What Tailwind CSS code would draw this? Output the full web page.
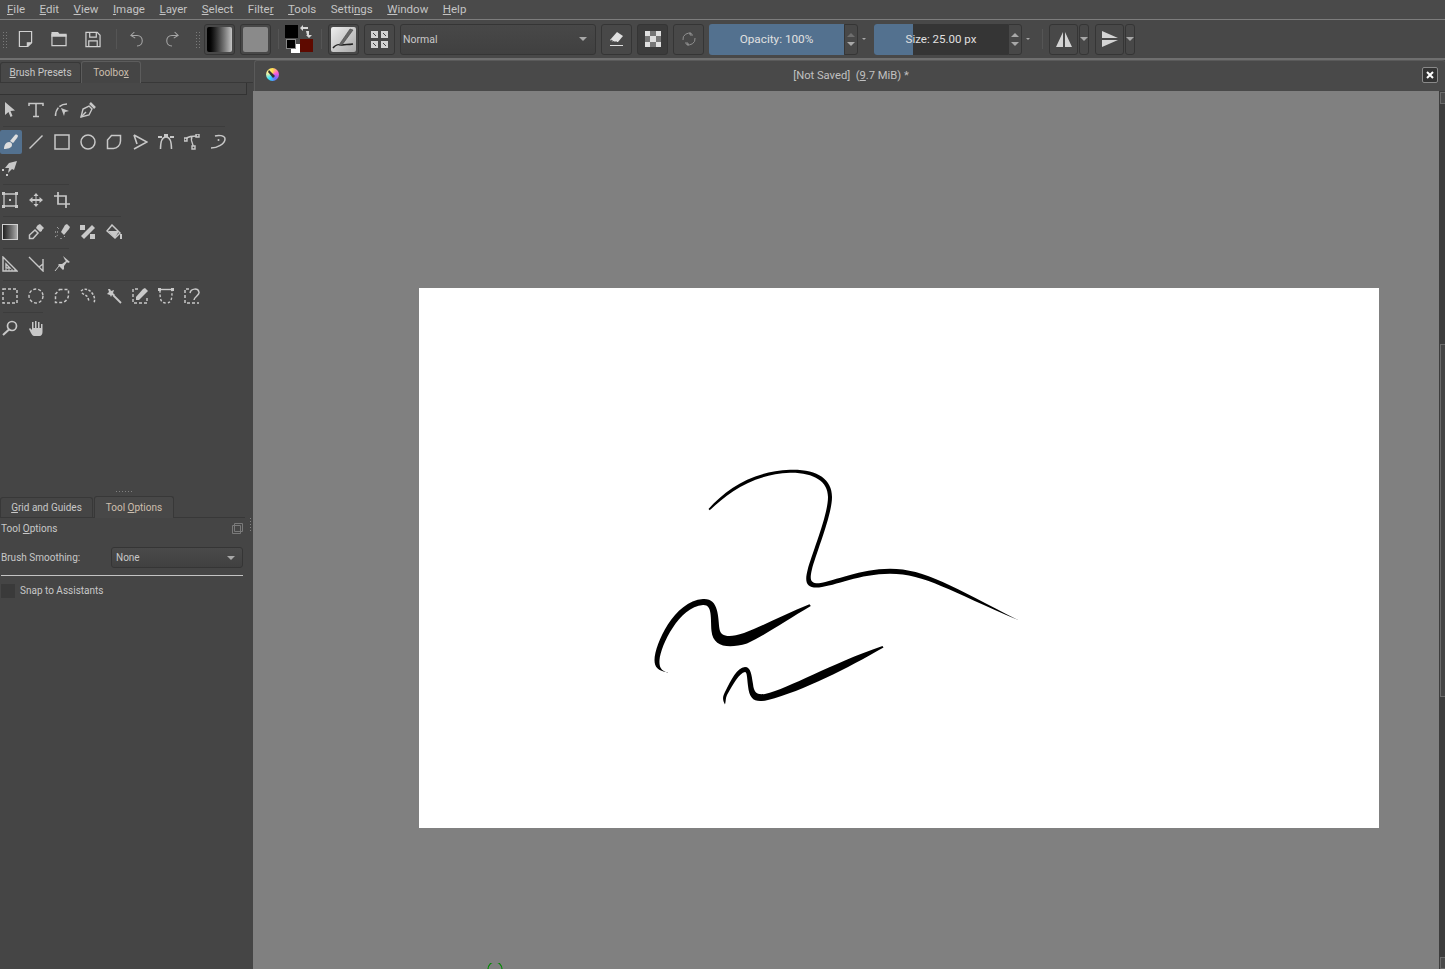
<!DOCTYPE html>
<html lang="en">
  <head>
    <meta charset="UTF-8" />
    <title>Krita</title>
    <script src="https://cdn.jsdelivr.net/npm/@tailwindcss/browser@4"></script>
  </head>
  <body class="bg-[#474747] font-['Roboto',sans-serif] text-[#c8c8c8] overflow-hidden">
    <div class="h-[969px] flex flex-col">
      <!-- menu -->
      <nav class="h-[20px] shrink-0 bg-[#4a4a4a] border-b border-[#7c7c7c] flex items-center pl-[7px] gap-[14.5px] text-[11.5px] leading-none text-[#c4c4c4]">
        <span><u>F</u>ile</span>
        <span><u>E</u>dit</span>
        <span><u>V</u>iew</span>
        <span><u>I</u>mage</span>
        <span><u>L</u>ayer</span>
        <span><u>S</u>elect</span>
        <span>Filte<u>r</u></span>
        <span><u>T</u>ools</span>
        <span>Setti<u>n</u>gs</span>
        <span><u>W</u>indow</span>
        <span><u>H</u>elp</span>
      </nav>

      <!-- toolbar -->
      <div class="h-[40px] shrink-0 bg-[#484848] border-b-2 border-b-[#6f6f6f] flex items-center text-[11px]">
        <div class="ml-[2px] w-[6px] h-[17px] bg-[radial-gradient(#7a7a7a_1px,transparent_1px)] bg-[length:3px_3px]"></div>
        <svg class="ml-[10px] w-[15px] h-[18px]" viewBox="0 0 16 18" fill="none" stroke="#d0d0d0" stroke-width="1.3"><path d="M1.5 1h13v12l-4 4h-9z"/><path d="M14 13h-4v4" fill="#d0d0d0"/></svg>
        <svg class="ml-[18px] w-[16px] h-[16px]" viewBox="0 0 17 16" fill="none" stroke="#d0d0d0" stroke-width="1.3"><path d="M1 3h15v12H1z"/><path d="M0.5 0.5h7l2 3h7v2h-16z" fill="#d0d0d0" stroke="none"/></svg>
        <svg class="ml-[18px] w-[16px] h-[17px]" viewBox="0 0 17 17" fill="none" stroke="#d0d0d0" stroke-width="1.3"><path d="M1 1h12l3 3v12H1z"/><path d="M5 1v5h7V1M4 16v-6h9v6"/></svg>
        <div class="ml-[15px] w-px h-[20px] bg-[#555]"></div>
        <svg class="ml-[13px] w-[14px] h-[18px]" viewBox="0 0 16 18" fill="none" stroke="#a8a8a8" stroke-width="1.2"><path d="M5 1L1 5l5 3"/><path d="M1.500 5H8c4 0 6 3 6 6s-2 6-6 6"/></svg>
        <svg class="ml-[21px] w-[14px] h-[18px]" viewBox="0 0 16 18" fill="none" stroke="#a8a8a8" stroke-width="1.2"><path d="M11 1l4 4-5 3"/><path d="M14.500 5H8c-4 0-6 3-6 6s2 6 6 6"/></svg>
        <div class="ml-[16px] w-[6px] h-[17px] bg-[radial-gradient(#7a7a7a_1px,transparent_1px)] bg-[length:3px_3px]"></div>
        <div class="ml-[3px] w-[31px] h-[31px] rounded-[3px] border border-[#353535] p-[2px]"><div class="h-full rounded-[2px] bg-linear-to-r from-black to-[#c4c4c4]"></div></div>
        <div class="ml-[5px] w-[31px] h-[31px] rounded-[3px] border border-[#353535] p-[2px]"><div class="h-full rounded-[2px] bg-[#8a8a8a]"></div></div>
        <div class="ml-[7px] w-px h-[20px] bg-[#555]"></div>
        <!-- colour selector -->
        <div class="relative ml-[6px] w-[29px] h-[29px]">
          <div class="absolute left-0 top-0 w-[13px] h-[13px] bg-black"></div>
          <svg class="absolute left-[15px] top-0 w-[13px] h-[13px]" viewBox="0 0 13 13" fill="#d8d8d8"><path d="M0 3l3-3v2h5v2H3v2zM6 6h3v4h3l-3 3-3-3h1z"/></svg>
          <div class="absolute left-[6px] top-[19px] w-[9px] h-[9px] bg-white"></div>
          <div class="absolute left-[1px] top-[14px] w-[10px] h-[10px] bg-black border border-[#888]"></div>
          <div class="absolute left-[15px] top-[14px] w-[13px] h-[13px] bg-[#5e0a00]"></div>
        </div>
        <div class="ml-[7px] w-px h-[20px] bg-[#555]"></div>
        <div class="ml-[6px] w-[31px] h-[31px] rounded-[3px] border border-[#353535] p-[2px]">
          <svg class="w-full h-full rounded-[2px] bg-linear-to-br from-[#eeeeee] to-[#a8a8a8]" viewBox="0 0 25 25" fill="none" stroke="#222"><path d="M2 21c4-5 6-3 9-3 3-1 6 0 11-1" stroke-width="1.4"/><path d="M8 18L19 2l3 1L11 18z" fill="#666" stroke="#444" stroke-width=".6"/></svg>
        </div>
        <div class="ml-[5px] w-[31px] h-[31px] rounded-[3px] border border-[#353535] flex items-center justify-center">
          <svg class="w-[17px] h-[17px]" viewBox="0 0 17 17" fill="#d4d4d4"><path d="M0 0h7v7H0zM10 0h7v7h-7zM0 10h7v7H0zM10 10h7v7h-7z"/><path d="M2 2l3 3M12 2l3 3M2 12l3 3M12 12l3 3" stroke="#444"/></svg>
        </div>
        <div class="ml-[5px] w-[196px] h-[31px] rounded-[3px] border border-[#353535] bg-linear-to-b from-[#484848] to-[#404040] flex items-center pl-[2px] pr-[8px] justify-between text-[10.5px] text-[#c8c8c8]">
          <span class="pt-px">Normal</span>
          <div class="w-0 h-0 border-x-[4px] border-x-transparent border-t-[4px] border-t-[#a8a8a8]"></div>
        </div>
        <div class="ml-[5px] w-[31px] h-[31px] rounded-[3px] border border-[#353535] flex items-center justify-center">
          <svg class="w-[15px] h-[14px]" viewBox="0 0 15 14" fill="#e0e0e0"><path d="M8 0l6 4-5 6H4L1 8z"/><path d="M1 13h13v1H1z"/><path d="M2 8l3 2h3" stroke="#484848" fill="none"/></svg>
        </div>
        <div class="ml-[5px] w-[31px] h-[31px] rounded-[3px] border border-[#353535] bg-[#3c3c3c] flex items-center justify-center">
          <svg class="w-[16px] h-[16px]" viewBox="0 0 16 16"><path d="M0 0h16v16H0z" fill="#e0e0e0"/><path d="M5 0h6v5H5zM0 5h5v6H0zM11 5h5v6h-5zM5 11h6v5H5z" fill="#777"/></svg>
        </div>
        <div class="ml-[5px] w-[31px] h-[31px] rounded-[3px] border border-[#353535] flex items-center justify-center">
          <svg class="w-[14px] h-[14px]" viewBox="0 0 14 14" fill="none" stroke="#8f8f8f"><path d="M1 8a6 6 0 0 1 9-6M13 6a6 6 0 0 1-9 6"/><path d="M8 0v3h3M6 14v-3H3"/></svg>
        </div>
        <div class="ml-[5px] w-[135px] h-[31px] pt-px rounded-l-[3px] bg-[#53718f] flex items-center justify-center text-[#e0e0e0] text-[11.75px]">Opacity:&nbsp;100%</div>
        <div class="w-[14px] h-[31px] rounded-r-[3px] border border-[#353535] flex flex-col items-center justify-center gap-[5px]">
          <div class="w-0 h-0 border-x-[4px] border-x-transparent border-b-[4px] border-b-[#6e6e6e]"></div>
          <div class="w-0 h-0 border-x-[4px] border-x-transparent border-t-[4px] border-t-[#a8a8a8]"></div>
        </div>
        <div class="ml-[4px] w-0 h-0 border-x-[2px] border-x-transparent border-t-[2px] border-t-[#a8a8a8]"></div>
        <div class="ml-[8px] w-[134px] h-[31px] pt-px rounded-l-[3px] bg-[#353535] relative flex items-center justify-center text-[#e0e0e0] text-[11.5px]">
          <div class="absolute left-0 top-0 bottom-0 w-[39px] rounded-l-[3px] bg-[#53718f]"></div>
          <span class="relative">Size:&nbsp;25.00&nbsp;px</span>
        </div>
        <div class="w-[14px] h-[31px] rounded-r-[3px] border border-[#353535] flex flex-col items-center justify-center gap-[5px]">
          <div class="w-0 h-0 border-x-[4px] border-x-transparent border-b-[4px] border-b-[#a8a8a8]"></div>
          <div class="w-0 h-0 border-x-[4px] border-x-transparent border-t-[4px] border-t-[#a8a8a8]"></div>
        </div>
        <div class="ml-[4px] w-0 h-0 border-x-[2px] border-x-transparent border-t-[2px] border-t-[#a8a8a8]"></div>
        <div class="ml-[12px] w-px h-[20px] bg-[#555]"></div>
        <div class="ml-[6px] w-[29px] h-[31px] rounded-[3px] border border-[#353535] flex items-center justify-center">
          <svg class="w-[16px] h-[15px]" viewBox="0 0 16 15" fill="#d4d4d4"><path d="M7 0v15H0zM9 0v15h7z"/></svg>
        </div>
        <div class="ml-px w-[10px] h-[31px] rounded-[3px] border border-[#353535] flex items-center justify-center">
          <div class="w-0 h-0 border-x-[4px] border-x-transparent border-t-[4px] border-t-[#a8a8a8]"></div>
        </div>
        <div class="ml-[6px] w-[29px] h-[31px] rounded-[3px] border border-[#353535] flex items-center justify-center">
          <svg class="w-[16px] h-[16px]" viewBox="0 0 16 16" fill="#d4d4d4"><path d="M0 0l16 7H0zM0 9h16L0 16z"/></svg>
        </div>
        <div class="ml-px w-[10px] h-[31px] rounded-[3px] border border-[#353535] flex items-center justify-center">
          <div class="w-0 h-0 border-x-[4px] border-x-transparent border-t-[4px] border-t-[#a8a8a8]"></div>
        </div>
      </div>

      <div class="flex-1 flex min-h-0">
        <!-- left dock -->
        <aside class="w-[253px] shrink-0 bg-[#454545] flex flex-col text-[10px]">
          <div class="h-[23px] shrink-0 flex items-end border-b border-[#383838] bg-[#484848]">
            <div class="w-[81px] h-[20px] rounded-t-[3px] border border-b-0 border-[#383838] flex items-center justify-center"><span><u>B</u>rush Presets</span></div>
            <div class="w-[60px] h-[22px] rounded-t-[3px] border border-b-0 border-[#5c5c5c] bg-[#454545] -mb-px flex items-center justify-center text-[#cdbfae]"><span>Toolbo<u>x</u></span></div>
          </div>
          <div class="w-[247px] h-[12px] shrink-0 border-r border-b border-[#333] bg-[#484848]"></div>

          <div class="flex-1 pt-[2px]">
            <div class="flex h-[26px] -ml-[3px]">
              <div class="w-[26px] flex items-center justify-center"><svg class="w-4 h-4" viewBox="0 0 16 16" fill="#c8c8c8"><path d="M3 0l10 8.500-4.500.5 2 5-2 1-2-5L3 13z"/></svg></div>
              <div class="w-[26px] flex items-center justify-center"><svg class="w-4 h-4" viewBox="0 0 16 16" fill="none" stroke="#c8c8c8" stroke-width="1.500"><path d="M1 4V1.500h14V4M8 1.500v13M5 14.500h6"/></svg></div>
              <div class="w-[26px] flex items-center justify-center"><svg class="w-4 h-4" viewBox="0 0 16 16" fill="none" stroke="#c8c8c8" stroke-width="1.500"><path d="M1.500 14C1.500 8 5 2 13 2" stroke-dasharray="9 1.500"/><path d="M7 6l8 3-4 1-1 4z" fill="#c8c8c8" stroke="none"/></svg></div>
              <div class="w-[26px] flex items-center justify-center"><svg class="w-4 h-4" viewBox="0 0 16 16" fill="none" stroke="#c8c8c8" stroke-width="1.400"><path d="M1 15l2-8 6-3 3 3-3 6z"/><path d="M1 15l5-5"/><path d="M10 1l5 5" stroke-width="2.500"/></svg></div>
            </div>
            <div class="h-px w-[222px] ml-[3px] mt-[3px] mb-[2px] bg-[#3c3c3c]"></div>

            <div class="flex h-[26px] -ml-[3px]">
              <div class="w-[26px] flex items-center justify-start pl-[3px]"><div class="w-[22px] h-[24px] rounded-[2px] bg-[#53718f] flex items-center justify-center"><svg class="w-4 h-4" viewBox="0 0 16 16" fill="#dedede"><path d="M1 15c0-4 2-7 5-7 2 0 3 1 3 3 0 3-5 4-8 4z"/><path d="M7 7l5-6c1-1 3 0 3 1s-4 6-5 7z"/></svg></div></div>
              <div class="w-[26px] flex items-center justify-center"><svg class="w-4 h-4" viewBox="0 0 16 16" fill="none" stroke="#c8c8c8" stroke-width="1.500"><path d="M1.500 14.500L14.500 1.500"/></svg></div>
              <div class="w-[26px] flex items-center justify-center"><svg class="w-4 h-4" viewBox="0 0 16 16" fill="none" stroke="#c8c8c8" stroke-width="1.500"><path d="M1 1h14v14H1z"/></svg></div>
              <div class="w-[26px] flex items-center justify-center"><svg class="w-4 h-4" viewBox="0 0 16 16" fill="none" stroke="#c8c8c8" stroke-width="1.500"><circle cx="8" cy="8" r="7"/></svg></div>
              <div class="w-[26px] flex items-center justify-center"><svg class="w-4 h-4" viewBox="0 0 16 16" fill="none" stroke="#c8c8c8" stroke-width="1.500"><path d="M5.500 1.500h9V7c0 4-3.500 7.500-7 7.500H1.500V6z"/></svg></div>
              <div class="w-[26px] flex items-center justify-center"><svg class="w-4 h-4" viewBox="0 0 16 16" fill="none" stroke="#c8c8c8" stroke-width="1.600"><path d="M2 1l13 7L2 15M2 1l3 9"/></svg></div>
              <div class="w-[26px] flex items-center justify-center"><svg class="w-4 h-4" viewBox="0 0 16 16" fill="none" stroke="#c8c8c8" stroke-width="1.500"><path d="M2.500 15C2.500 7 5 3 8 3s5.500 4 5.500 12"/><path d="M0 2h4v2H0zM6 0h4v3H6zM12 2h4v2h-4z" fill="#c8c8c8" stroke="none"/></svg></div>
              <div class="w-[26px] flex items-center justify-center"><svg class="w-4 h-4" viewBox="0 0 16 16" fill="none" stroke="#c8c8c8" stroke-width="1.400"><path d="M2 5c2-3 6-3 11-3M8 3C6 6 9 9 9 12"/><path d="M0 4h3v3H0zM12 0h3v3h-3zM8 12h3v3H8z"/></svg></div>
              <div class="w-[26px] flex items-center justify-center"><svg class="w-4 h-4" viewBox="0 0 16 16" fill="none" stroke="#c8c8c8" stroke-width="1.500"><path d="M1 14c6 0 14-4 14-9 0-4-7-4-10-3"/><circle cx="8.500" cy="6" r="1" fill="#c8c8c8" stroke="none"/></svg></div>
            </div>
            <div class="flex h-[26px] -ml-[3px]">
              <div class="w-[26px] flex items-center justify-center"><svg class="w-4 h-4" viewBox="0 0 16 16" fill="#c8c8c8"><path d="M15 1L7 3 3 8l4 0-1 5 4-4 2 1z"/><path d="M0 9h2v2H0zM4 14h2v2H4z"/></svg></div>
            </div>
            <div class="h-px w-[66px] ml-[3px] mt-[3px] mb-[2px] bg-[#3c3c3c]"></div>

            <div class="flex h-[26px] -ml-[3px]">
              <div class="w-[26px] flex items-center justify-center"><svg class="w-4 h-4" viewBox="0 0 16 16" fill="none" stroke="#c8c8c8" stroke-width="1.300"><path d="M2 2h12v12H2z"/><path d="M0 0h3v3H0zM13 0h3v3h-3zM0 13h3v3H0zM13 13h3v3h-3zM7 7h2v2H7z" fill="#c8c8c8" stroke="none"/></svg></div>
              <div class="w-[26px] flex items-center justify-center"><svg class="w-4 h-4" viewBox="0 0 16 16" fill="#c8c8c8"><path d="M8 1l2.500 3h-2v3h3V5L15 8l-3.500 3V9h-3v3h2L8 15l-2.500-3h2V9h-3v2L1 8l3.500-3v2h3V4h-2z"/></svg></div>
              <div class="w-[26px] flex items-center justify-center"><svg class="w-4 h-4" viewBox="0 0 16 16" fill="none" stroke="#c8c8c8" stroke-width="1.700"><path d="M4 0v12h12M0 4h12v12"/></svg></div>
            </div>
            <div class="h-px w-[118px] ml-[3px] mt-[3px] mb-[2px] bg-[#3c3c3c]"></div>

            <div class="flex h-[26px] -ml-[3px]">
              <div class="w-[26px] flex items-center justify-center"><div class="w-4 h-4 border border-[#d0d0d0] bg-linear-to-r from-[#222] to-[#aaa]"></div></div>
              <div class="w-[26px] flex items-center justify-center"><svg class="w-4 h-4" viewBox="0 0 16 16" fill="#c8c8c8"><path d="M10 1l2-1 4 4-2 2 0 1-2 1-4-4 1-2z"/><path d="M7 6l3 3-5 5.500H1.500V11z" fill="none" stroke="#c8c8c8" stroke-width="1.500"/></svg></div>
              <div class="w-[26px] flex items-center justify-center"><svg class="w-4 h-4" viewBox="0 0 16 16" fill="#c8c8c8"><path d="M11 1l2-1 3 3-1 2-5 6-3-3z"/><path d="M1 8h3M3 3l2 2M7 14v2M1 13l3-2M11 13l-1-1" stroke="#c8c8c8" fill="none" stroke-dasharray="1 1"/></svg></div>
              <div class="w-[26px] flex items-center justify-center"><svg class="w-4 h-4" viewBox="0 0 16 16" fill="#c8c8c8"><path d="M1 12L12 1l3 3L4 15z"/><path d="M0 1h5v5H0zM10 10h5v5h-5z"/></svg></div>
              <div class="w-[26px] flex items-center justify-center"><svg class="w-4 h-4" viewBox="0 0 16 16" fill="none" stroke="#c8c8c8" stroke-width="1.500"><path d="M6 1l8 8-5 5-8-7z"/><path d="M2 7h11l-4 7z" fill="#c8c8c8" stroke="none"/><path d="M15 10v5" stroke-width="2"/></svg></div>
            </div>
            <div class="h-px w-[66px] ml-[3px] mt-[3px] mb-[2px] bg-[#3c3c3c]"></div>

            <div class="flex h-[26px] -ml-[3px]">
              <div class="w-[26px] flex items-center justify-center"><svg class="w-4 h-4" viewBox="0 0 16 16" fill="none" stroke="#c8c8c8" stroke-width="1.400"><path d="M1 1v14h14zM4 8v4h4z"/><path d="M4 15v-2M7 15v-2M10 15v-2M13 15v-2" stroke-width="1"/></svg></div>
              <div class="w-[26px] flex items-center justify-center"><svg class="w-4 h-4" viewBox="0 0 16 16" fill="none" stroke="#c8c8c8" stroke-width="1.400"><path d="M1 1l14 14V3M11 11l4-3"/></svg></div>
              <div class="w-[26px] flex items-center justify-center"><svg class="w-4 h-4" viewBox="0 0 16 16" fill="#c8c8c8"><path d="M9 0l7 6-2 1-1-1-3 4v3l-1 1-5-5 1-1h3l4-3-1-1z"/><path d="M1 15l4-5" stroke="#c8c8c8"/></svg></div>
            </div>
            <div class="h-px w-[196px] ml-[3px] mt-[3px] mb-[2px] bg-[#3c3c3c]"></div>

            <div class="flex h-[26px] -ml-[3px]">
              <div class="w-[26px] flex items-center justify-center"><svg class="w-4 h-4" viewBox="0 0 16 16" fill="none" stroke="#c8c8c8" stroke-width="1.500"><path d="M1 1h14v14H1z" stroke-dasharray="3 2"/></svg></div>
              <div class="w-[26px] flex items-center justify-center"><svg class="w-4 h-4" viewBox="0 0 16 16" fill="none" stroke="#c8c8c8" stroke-width="1.400"><circle cx="8" cy="8" r="7" stroke-dasharray="3 2"/></svg></div>
              <div class="w-[26px] flex items-center justify-center"><svg class="w-4 h-4" viewBox="0 0 16 16" fill="none" stroke="#c8c8c8" stroke-width="1.500"><path d="M5.500 1.500h9V7c0 4-3.500 7.500-7 7.500H1.500V6z" stroke-dasharray="3 2"/></svg></div>
              <div class="w-[26px] flex items-center justify-center"><svg class="w-4 h-4" viewBox="0 0 16 16" fill="none" stroke="#c8c8c8" stroke-width="1.500"><path d="M1 3c3-3 8-2 11 2s3 7 2 10M2 5c2 2 5 2 6 5l1 3" stroke-dasharray="2.500 1.500"/></svg></div>
              <div class="w-[26px] flex items-center justify-center"><svg class="w-4 h-4" viewBox="0 0 16 16" fill="#c8c8c8"><path d="M4 1l1 2 3-1-1 3 2 2-3 0-1 2-1-2-3-1 2-2-1-3z"/><path d="M7 7l8 8" stroke="#c8c8c8" stroke-width="1.800"/></svg></div>
              <div class="w-[26px] flex items-center justify-center"><svg class="w-4 h-4" viewBox="0 0 16 16" fill="none" stroke="#c8c8c8" stroke-width="1.400"><path d="M6 1H1v14h14v-5" stroke-dasharray="3 2"/><path d="M11 1l2-1 3 3-2 2-7 7-3 0 0-3z" fill="#c8c8c8" stroke="none"/></svg></div>
              <div class="w-[26px] flex items-center justify-center"><svg class="w-4 h-4" viewBox="0 0 16 16" fill="none" stroke="#c8c8c8" stroke-width="1.400"><path d="M2 2c0 8 0 13 6 13s6-5 6-13" stroke-dasharray="2.500 2"/><path d="M1 1.500h14"/><path d="M0 0h3v3H0zM13 0h3v3h-3z" fill="#c8c8c8" stroke="none"/></svg></div>
              <div class="w-[26px] flex items-center justify-center"><svg class="w-4 h-4" viewBox="0 0 16 16" fill="none" stroke="#c8c8c8" stroke-width="1.500"><path d="M5 1H1v14h14" stroke-dasharray="3 2"/><path d="M6 5c1-5 8-5 9-1 1 3-5 5-5 8"/></svg></div>
            </div>
            <div class="h-px w-[40px] ml-[3px] mt-[3px] mb-[2px] bg-[#3c3c3c]"></div>

            <div class="flex h-[26px] -ml-[3px]">
              <div class="w-[26px] flex items-center justify-center"><svg class="w-4 h-4" viewBox="0 0 16 16" fill="none" stroke="#c8c8c8" stroke-width="1.700"><circle cx="10" cy="6" r="4.500"/><path d="M7 9.500L1 15" stroke-width="2"/></svg></div>
              <div class="w-[26px] flex items-center justify-center"><svg class="w-4 h-4" viewBox="0 0 16 16" fill="#c8c8c8"><path d="M4 2h1.500v6H7V1h1.500v7H10V2h1.500v6H13V4h1.500v8c0 2-1 4-3 4H6c-1 0-2-1-3-3L1 9l1-1 2 2z"/></svg></div>
            </div>
          </div>

          <!-- tool options docker -->
          <div class="relative h-[483px] shrink-0 flex flex-col">
            <div class="absolute left-[115px] top-[4px] w-[17px] h-[3px] bg-[radial-gradient(#808080_1px,transparent_1px)] bg-[length:3px_3px]"></div>
            <div class="absolute right-[1px] top-[31px] w-[3px] h-[16px] bg-[radial-gradient(#808080_1px,transparent_1px)] bg-[length:3px_3px]"></div>
            <div class="mt-[10px] h-[22px] shrink-0 w-[245px] flex items-end border-b border-[#383838]">
              <div class="w-[93px] h-[20px] rounded-t-[3px] border border-b-0 border-[#383838] flex items-center justify-center"><span><u>G</u>rid and Guides</span></div>
              <div class="ml-px w-[80px] h-[22px] rounded-t-[3px] border border-b-0 border-[#383838] bg-[#484848] -mb-px flex items-center justify-center text-[#cdbfae]"><span>Tool <u>O</u>ptions</span></div>
            </div>
            <div class="pl-px pr-[10px] h-[21px] shrink-0 flex items-center justify-between">
              <span>Tool <u>O</u>ptions</span>
              <svg class="w-[11px] h-[11px]" viewBox="0 0 11 11" fill="none" stroke="#7a7a7a"><path d="M.5 2.500h8v8h-8zM2.500.5h8v8h-8z"/></svg>
            </div>
            <div class="mt-[8px] pl-px w-[243px] flex items-center justify-between">
              <span>Brush Smoothing:</span>
              <div class="w-[132px] h-[21px] rounded-[3px] border border-[#353535] bg-linear-to-b from-[#4a4a4a] to-[#404040] flex items-center justify-between pl-[4px] pr-[7px]">
                <span>None</span>
                <div class="w-0 h-0 border-x-[4px] border-x-transparent border-t-[4px] border-t-[#a8a8a8]"></div>
              </div>
            </div>
            <div class="mt-[7px] ml-px w-[242px] h-px bg-[#c4c4c4]"></div>
            <div class="mt-[7px] pl-px flex items-center gap-[5px]">
              <div class="w-[14px] h-[14px] bg-[#3a3a3a]"></div>
              <span>Snap to Assistants</span>
            </div>
          </div>
        </aside>

        <!-- document area -->
        <main class="flex-1 min-w-0 flex flex-col">
          <div class="h-[31px] shrink-0 ml-px pt-px bg-[#494949] rounded-t-[3px] border-l border-t border-[#5a5a5a] relative flex items-center justify-center text-[11.2px] text-[#c0c0c0]">
            <div class="absolute left-[11px] top-[7px] w-[13px] h-[13px] rounded-full bg-[conic-gradient(#ffe14d,#ff58d8,#6a6aff,#2fe0ff,#fff5a0,#ffe14d)] overflow-hidden">
              <svg class="w-full h-full" viewBox="0 0 13 13"><path d="M3 2l6 6-2 2-5-6z" fill="#333"/></svg>
            </div>
            <span class="pl-[2px]">[Not Saved]&nbsp; (<u>9</u>.7 MiB) *</span>
            <div class="absolute right-[7px] top-[6px] w-[16px] h-[16px] rounded-[2px] border border-[#8a8a8a] bg-[#333] flex items-center justify-center">
              <svg class="w-[8px] h-[8px]" viewBox="0 0 8 8" fill="none" stroke="#fff" stroke-width="2"><path d="M1 1l6 6M7 1L1 7"/></svg>
            </div>
          </div>
          <div class="flex-1 flex min-h-0">
            <div class="relative flex-1 bg-[#808080] overflow-hidden">
              <div class="ml-[166px] mt-[197px] w-[960px] h-[540px] bg-white">
                <svg class="w-full h-full" viewBox="419 288 960 540" fill="#000">
                  <path d="M708.500 509C727 488.500 752 471.500 790 469.800C817 469 832 479 832 497C832 515 816.500 552 811.800 570C809.500 580 810.500 583.500 819 583.200C835 581 860 568.800 890 568.800C925 568.800 953 587 1018 620C950 591.500 925 573.800 890 573.800C860 573.800 835 586 819 587.400C806 588.400 804.500 582 807.600 570C812.500 552 828 515 828 497C828 481.500 814 472.500 790 472.800C752 474.500 728 493 709.800 510.200Z"/>
                  <path d="M667.700 672.300C658 671 654.500 667 654.500 660C655 644 674 601 703 599C719 598 718 617 719.500 629C720.500 636 728 638.500 744 633C764 625.500 785 614 809.500 604.300L810.800 606C787 620 767 634 747 643.500C728 649 713 647 711.500 631C710.500 618 712.500 604.500 703 605C679 607 661 645 659.500 660C659.200 666 660 670.500 667.700 672.700Z"/>
                  <path d="M725 704.500C722.500 700 722.500 697 724.500 693C731 680 737 667.500 745 667C751 667 751.500 675 753 684C754 693 757 695 765 694C790 688 830 664 882.500 646L883.500 647.500C848 668 803 691 768 700C755 703 749.500 700 748 686C747 677 747 672 745 672C739.500 673 733 684 727 695C725.500 698 726 701 725 704.500Z"/>
                </svg>
              </div>
              <svg class="absolute left-[234px] top-[872px] w-[16px] h-[6px]" viewBox="0 0 16 6" fill="none" stroke="#008a00" stroke-width="1.200"><path d="M1 6a7 7 0 0 1 14 0"/></svg>
            </div>
            <!-- vertical scrollbar -->
            <div class="w-[6px] shrink-0 bg-[#3c3c3c] relative">
              <div class="absolute left-[1px] right-0 top-[1px] h-[12px] border border-r-0 border-[#6a6a6a] bg-[#4a4a4a]"></div>
              <div class="absolute left-[1px] right-0 top-[253px] h-[353px] border border-r-0 border-[#6a6a6a] bg-[#444]"></div>
              <div class="absolute left-[1px] right-0 bottom-0 h-[12px] border border-r-0 border-[#6a6a6a] bg-[#4a4a4a]"></div>
            </div>
          </div>
        </main>
      </div>
    </div>
  </body>
</html>
